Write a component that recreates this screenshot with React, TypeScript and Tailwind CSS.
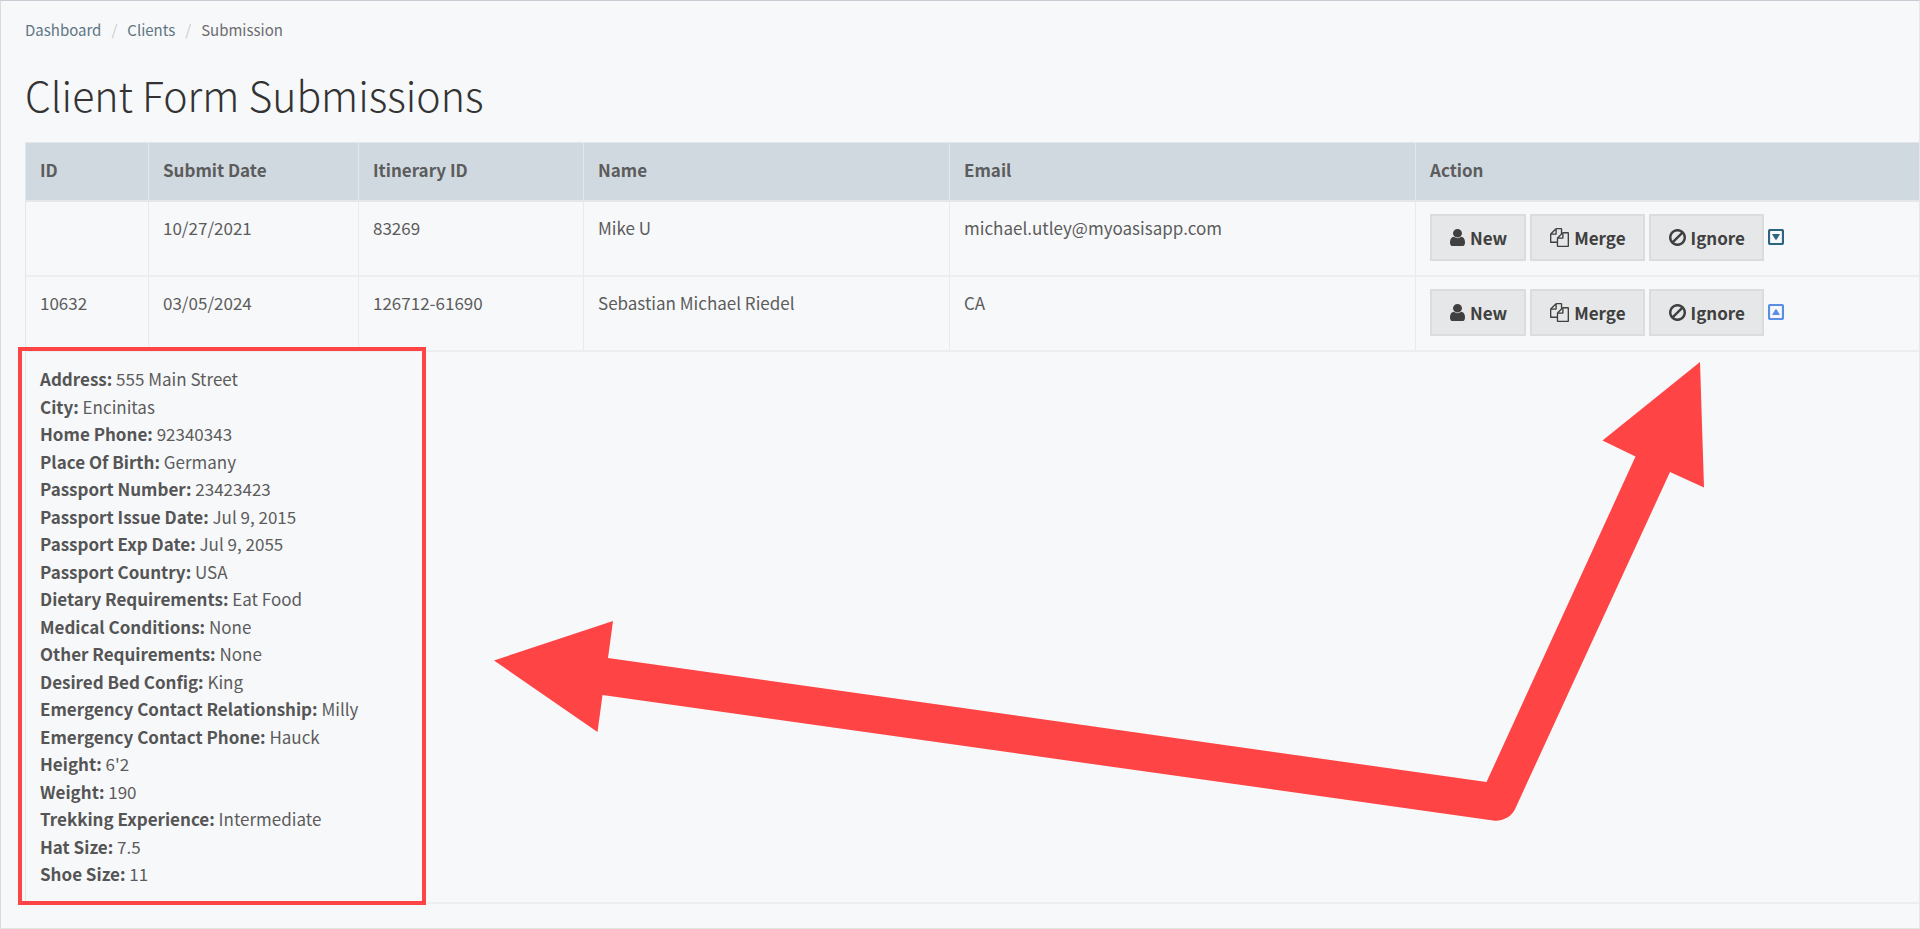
import { useState } from "react";

type Submission = {
  id: string;
  date: string;
  itinerary: string;
  name: string;
  email: string;
  details: [string, string][];
};

const submissions: Submission[] = [
  {
    id: "",
    date: "10/27/2021",
    itinerary: "83269",
    name: "Mike U",
    email: "michael.utley@myoasisapp.com",
    details: [],
  },
  {
    id: "10632",
    date: "03/05/2024",
    itinerary: "126712-61690",
    name: "Sebastian Michael Riedel",
    email: "CA",
    details: [
      ["Address", "555 Main Street"],
      ["City", "Encinitas"],
      ["Home Phone", "92340343"],
      ["Place Of Birth", "Germany"],
      ["Passport Number", "23423423"],
      ["Passport Issue Date", "Jul 9, 2015"],
      ["Passport Exp Date", "Jul 9, 2055"],
      ["Passport Country", "USA"],
      ["Dietary Requirements", "Eat Food"],
      ["Medical Conditions", "None"],
      ["Other Requirements", "None"],
      ["Desired Bed Config", "King"],
      ["Emergency Contact Relationship", "Milly"],
      ["Emergency Contact Phone", "Hauck"],
      ["Height", "6'2"],
      ["Weight", "190"],
      ["Trekking Experience", "Intermediate"],
      ["Hat Size", "7.5"],
      ["Shoe Size", "11"],
    ],
  },
];

const columns = ["ID", "Submit Date", "Itinerary ID", "Name", "Email", "Action"];

function UserIcon() {
  return (
    <svg viewBox="256 128 1280 1536" className="h-[17px] w-[15px]" fill="currentColor" aria-hidden="true" preserveAspectRatio="none">
      <path d="M1536 1399q0 109-62.5 187t-150.5 78h-854q-88 0-150.5-78t-62.5-187q0-85 8.5-160.5t31.5-152 58.5-131 94-89 134.5-34.5q131 128 313 128t313-128q76 0 134.5 34.5t94 89 58.5 131 31.5 152 8.5 160.500zm-256-887q0 159-112.500 271.500t-271.500 112.500-271.500-112.500-112.500-271.500 112.500-271.500 271.500-112.500 271.500 112.500 112.500 271.500z" />
    </svg>
  );
}

function FilesIcon() {
  return (
    <svg viewBox="0 0 1792 1792" className="size-[19px]" fill="currentColor" aria-hidden="true">
      <path d="M1696 384q40 0 68 28t28 68v1216q0 40-28 68t-68 28h-960q-40 0-68-28t-28-68v-288h-544q-40 0-68-28t-28-68v-672q0-40 20-88t48-76l408-408q28-28 76-48t88-20h416q40 0 68 28t28 68v328q68-40 128-40h416zm-544 213l-299 299h299v-299zm-640-384l-299 299h299v-299zm196 647l316-316v-416h-384v416q0 40-28 68t-68 28h-416v640h512v-256q0-40 20-88t48-76zm956 804v-1152h-384v416q0 40-28 68t-68 28h-416v640h896z" />
    </svg>
  );
}

function BanIcon() {
  return (
    <svg viewBox="128 125 1536 1536" className="size-[17px]" fill="currentColor" aria-hidden="true">
      <path d="M1440 893q0-161-87-295l-754 753q137 89 297 89 111 0 211.500-43.500t173.500-116.500 116-174.500 43-212.500zm-999 299l755-754q-135-91-300-91-148 0-273 73t-198 199-73 274q0 162 89 299zm1223-299q0 157-61 300t-163.500 246-245 164-298.500 61-298.500-61-245-164-163.500-246-61-300 61-299.500 163.500-245.500 245-164 298.500-61 298.500 61 245 164 163.500 245.500 61 299.500z" />
    </svg>
  );
}

function CaretSquare({ up }: { up: boolean }) {
  return (
    <svg viewBox="0 0 16 16" className="size-[16px]" fill="currentColor" aria-hidden="true">
      <rect x="1" y="1" width="14" height="14" rx="1.500" fill="none" stroke="currentColor" strokeWidth="2.200" />
      {up ? <path d="M4 11h8L8.500 5.200h-1z" /> : <path d="M4 5h8L8.500 10.800h-1z" />}
    </svg>
  );
}

const actionButton =
  "flex h-[47px] cursor-pointer items-center gap-[5px] border-2 border-[#dbdcdd] bg-[#e6e7e8] pr-[17px] pl-[18px] font-bold leading-[24px] text-[#404040]";

function Slash() {
  return (
    <span className="px-[10px] text-[#c8ccd0]" aria-hidden="true">
      /
    </span>
  );
}

function Callout() {
  return (
    <div className="pointer-events-none absolute -left-[8px] -top-[5px] -bottom-[3px] w-[408px] border-4 border-[#fe4444]" />
  );
}

function Arrow() {
  return (
    <svg
      viewBox="494 362 1211 460"
      className="pointer-events-none absolute left-[468px] top-[10px] h-[460px] w-[1211px]"
      fill="#fe4444"
      aria-hidden="true"
    >
      <path d="M494 660.500 613 621 608 658 1486.500 782 1635.500 456.500 1602.500 440.500 1700 362 1704 487.500 1670 472 1516 807A21 21 0 0 1 1493 820.500L602.500 695 597.500 732Z" />
    </svg>
  );
}

function Row({ item, initiallyOpen }: { item: Submission; initiallyOpen: boolean }) {
  const [open, setOpen] = useState(initiallyOpen);
  const cell = "border-b-2 border-r border-b-[#edeeef] border-r-[#e8eaec] px-[14px] pt-[12px] pb-[12px] align-top";
  return (
    <>
      <tr>
        <td className={cell}>{item.id}</td>
        <td className={cell}>{item.date}</td>
        <td className={cell}>{item.itinerary}</td>
        <td className={cell}>{item.name}</td>
        <td className={cell}>{item.email}</td>
        <td className="border-b-2 border-[#edeeef] px-[14px] pt-[12px] pb-[14px] align-top">
          <div className="flex gap-[4px]">
            <button type="button" className={actionButton}>
              <UserIcon />
              New
            </button>
            <button type="button" className={actionButton}>
              <FilesIcon />
              Merge
            </button>
            <button type="button" className={actionButton}>
              <BanIcon />
              Ignore
            </button>
            <button
              type="button"
              aria-label="Toggle details"
              aria-expanded={open}
              onClick={() => setOpen(!open)}
              className={
                open
                  ? "mt-[15px] h-[16px] cursor-pointer text-[#5b8de8]"
                  : "mt-[15px] h-[16px] cursor-pointer text-[#2f6480]"
              }
            >
              <CaretSquare up={open} />
            </button>
          </div>
        </td>
      </tr>
      {open && (
        <tr>
          <td colSpan={6} className="border-b-2 border-[#edeeef] p-0">
            <div className="relative px-[14px] pt-[13px] pb-[14px]">
              <dl className="grid min-h-[523px] leading-[27px]">
                {item.details.map(([label, value]) => (
                  <div key={label}>
                    <dt className="inline font-bold text-[#555]">{label}:</dt>{" "}
                    <dd className="inline">{value}</dd>
                  </div>
                ))}
              </dl>
              <Callout />
              <Arrow />
            </div>
          </td>
        </tr>
      )}
    </>
  );
}

export default function App() {
  return (
    <main className="min-h-screen overflow-hidden border border-t-[#c9cbd3] border-r-[#e8e6e6] border-b-[#e4e4e2] border-l-[#d5dde3] bg-[#f7f8fa] pl-[24px] font-['Noto_Sans_CJK_SC','Noto_Sans',sans-serif] text-[17px] leading-[28px] text-[#5c5c5c]">
      <nav aria-label="Breadcrumb" className="mt-[17px] flex text-[15px] leading-[24px]">
        <a href="#dashboard" className="text-[#607583]">Dashboard</a>
        <Slash />
        <a href="#clients" className="text-[#607583]">Clients</a>
        <Slash />
        <span className="text-[#6b6b70]">Submission</span>
      </nav>
      <h1 className="mt-[22px] text-[41px] font-light leading-[60px] text-[#333]">Client Form Submissions</h1>
      <table className="mt-[18px] w-full table-fixed border-separate border-spacing-0 border-t border-l border-[#e4e7ea] text-left">
        <colgroup>
          <col className="w-[123px]" />
          <col className="w-[210px]" />
          <col className="w-[225px]" />
          <col className="w-[366px]" />
          <col className="w-[466px]" />
          <col />
        </colgroup>
        <thead>
          <tr>
            {columns.map((c) => (
              <th
                key={c}
                scope="col"
                className="border-r border-b-2 border-[#e4e8eb] bg-[#d1d9e0] px-[14px] pt-[13px] pb-[16px] font-bold text-[#5c5c5c] last:border-r-0"
              >
                {c}
              </th>
            ))}
          </tr>
        </thead>
        <tbody>
          {submissions.map((s) => (
            <Row key={s.email} item={s} initiallyOpen={s.details.length > 0} />
          ))}
        </tbody>
      </table>
    </main>
  );
}
